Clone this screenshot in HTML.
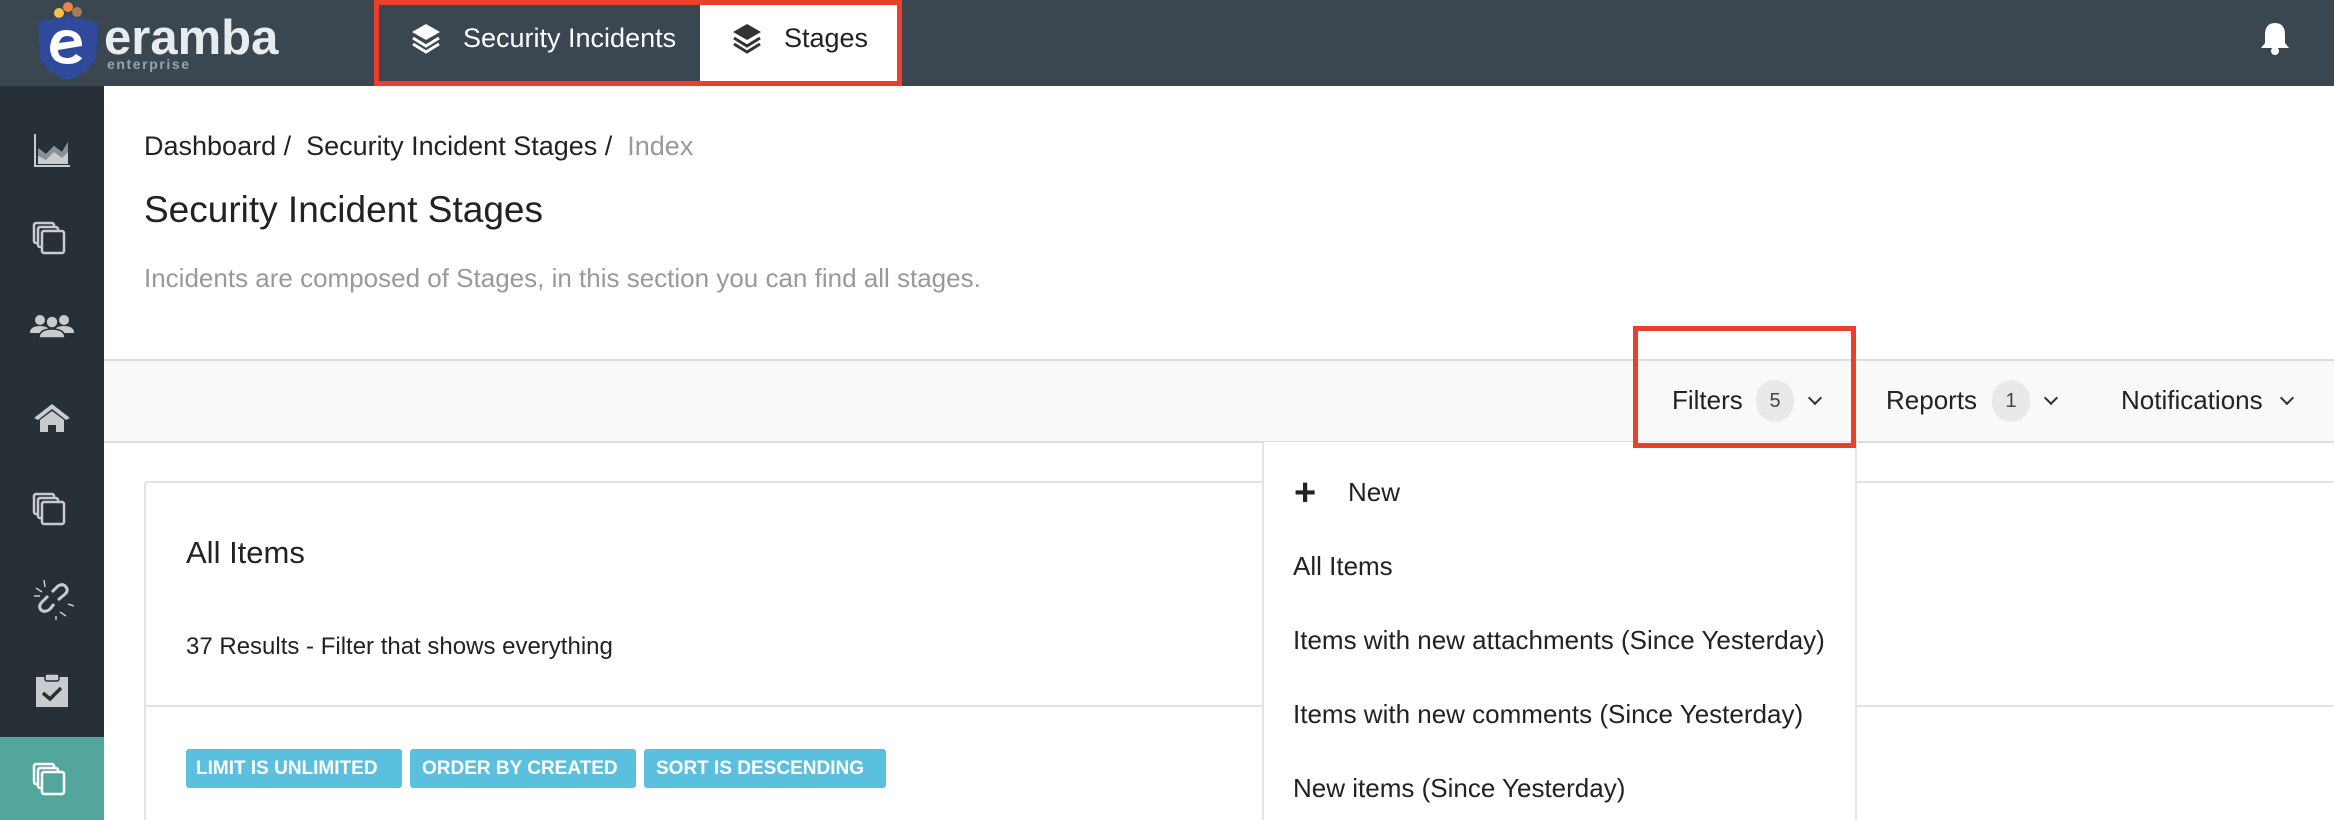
<!DOCTYPE html>
<html style="width:2334px;height:820px;overflow:hidden"><head><meta charset="utf-8"><style>
*{box-sizing:border-box;margin:0;padding:0}
body{width:2334px;height:820px;overflow:hidden;background:#fff;font-family:"Liberation Sans",Arial,sans-serif;position:relative;color:#222}
.top{position:absolute;left:0;top:0;width:2334px;height:86px;background:#3a4650}
.side{position:absolute;left:0;top:86px;width:104px;height:734px;background:#283037}
.abs{position:absolute}
.ic{position:absolute;left:30px;width:44px;height:44px}
.chev{position:absolute;width:10px;height:10px;border-right:2px solid #333;border-bottom:2px solid #333;transform:rotate(45deg)}
</style></head><body>
<div class="top"></div>
<svg class="abs" style="left:30px;top:0" width="80" height="86" viewBox="0 0 80 86">
<circle cx="29" cy="13" r="5" fill="#f2c14e"/><circle cx="38" cy="7" r="5" fill="#e8864a"/><circle cx="47" cy="12" r="5" fill="#a87c5a"/>
<path d="M8 22 L38 16 L68 22 L66 58 Q60 72 38 80 Q16 72 10 58 Z" fill="#2f4a9c"/>
<path d="M36 30 Q22 30 20 47 Q20 64 38 64 Q48 64 52 58 L46 54 Q42 58 38 58 Q28 58 28 50 L52 46 Q52 30 36 30 Z M29 43 Q31 36 37 36 Q44 36 44 41 Z" fill="#fff"/>
</svg>
<div class="abs" style="left:104px;top:10px;font-size:49px;font-weight:bold;color:#e8ecef">eramba</div>
<div class="abs" style="left:107px;top:56px;font-size:14px;font-weight:bold;color:#9aa3ab;letter-spacing:1.6px">enterprise</div>
<div class="abs" style="left:374px;top:0;width:528px;height:86px;border:5px solid #e8402a;background:#3a4650"></div>
<div class="abs" style="left:700px;top:5px;width:197px;height:76px;background:#fff"></div>
<svg class="abs" style="left:410px;top:22px" width="32" height="34" viewBox="0 0 32 34"><path d="M16 2 L30 10 L16 18 L2 10 Z" fill="#fff"/><path d="M3 16 L16 24 L29 16" stroke="#fff" stroke-width="3" fill="none"/><path d="M3 22 L16 30 L29 22" stroke="#fff" stroke-width="3" fill="none"/></svg>
<div class="abs" style="left:463px;top:23px;font-size:27px;color:#fff">Security Incidents</div>
<svg class="abs" style="left:731px;top:22px" width="32" height="34" viewBox="0 0 32 34"><path d="M16 2 L30 10 L16 18 L2 10 Z" fill="#333"/><path d="M3 16 L16 24 L29 16" stroke="#333" stroke-width="3" fill="none"/><path d="M3 22 L16 30 L29 22" stroke="#333" stroke-width="3" fill="none"/></svg>
<div class="abs" style="left:784px;top:23px;font-size:27px;color:#222">Stages</div>
<svg class="abs" style="left:2259px;top:20px" width="32" height="36" viewBox="0 0 32 36"><path d="M16 3 Q26 3 26 15 L26 23 L30 28 L2 28 L6 23 L6 15 Q6 3 16 3 Z" fill="#fff"/><circle cx="16" cy="31" r="4" fill="#fff"/></svg>
<div class="side"></div>
<div class="abs" style="left:0;top:737px;width:104px;height:83px;background:#52a69c"></div>
<svg class="ic" style="top:128px" viewBox="0 0 44 44"><path d="M5 6 V38 H40" stroke="#c8ccce" stroke-width="2" fill="none"/><path d="M8 20 L16 26 L24 18 L32 24 L38 14 V36 H8 Z" fill="#c8ccce"/><path d="M8 20 L16 26 L24 18 L32 24 L38 14 V24 L32 30 L24 24 L16 32 L8 28Z" fill="#8a9196"/></svg>
<svg class="ic" style="top:217px" viewBox="0 0 44 44"><g fill="none" stroke="#c8ccce" stroke-width="2.5"><rect x="4" y="6" width="20" height="20" rx="2"/><rect x="8" y="10" width="20" height="20" rx="2" fill="#283037"/><rect x="12" y="14" width="22" height="22" rx="2" fill="#283037"/></g></svg>
<svg class="ic" style="top:305px" viewBox="0 0 44 44"><g fill="#c8ccce"><circle cx="10" cy="15" r="5"/><circle cx="34" cy="15" r="5"/><path d="M0 28 Q0 21 10 21 Q20 21 20 28 Z M24 28 Q24 21 34 21 Q44 21 44 28Z"/><circle cx="22" cy="17" r="6" stroke="#283037" stroke-width="1.5"/><path d="M9 33 Q9 24 22 24 Q35 24 35 33 Z" stroke="#283037" stroke-width="1.5"/></g></svg>
<svg class="ic" style="top:396px" viewBox="0 0 44 44"><path d="M4 22 L22 8 L40 22 L36 24 L22 13 L8 24 Z" fill="#c8ccce"/><path d="M10 24 L22 15 L34 24 V36 H26 V29 H18 V36 H10 Z" fill="#c8ccce"/></svg>
<svg class="ic" style="top:488px" viewBox="0 0 44 44"><g fill="none" stroke="#c8ccce" stroke-width="2.5"><rect x="4" y="6" width="20" height="20" rx="2"/><rect x="8" y="10" width="20" height="20" rx="2" fill="#283037"/><rect x="12" y="14" width="22" height="22" rx="2" fill="#283037"/></g></svg>
<svg class="ic" style="top:576px" viewBox="0 0 44 44"><g fill="none" stroke="#c8ccce" stroke-width="3"><path d="M22 16 L28 10 Q33 7 36 11 Q39 15 34 19 L28 24"/><path d="M18 20 L12 26 Q8 30 11 34 Q15 37 20 33 L24 28"/></g><g stroke="#c8ccce" stroke-width="1.5"><path d="M6 12 L12 16 M14 4 L15 11 M30 36 L36 40 M38 28 L44 30 M4 20 L10 20 M26 40 L26 44"/></g></svg>
<svg class="ic" style="top:669px" viewBox="0 0 44 44"><rect x="6" y="8" width="32" height="30" fill="#c8ccce"/><rect x="15" y="5" width="14" height="7" rx="2" fill="#c8ccce" stroke="#283037" stroke-width="1.5"/><path d="M13 24 L20 30 L31 19" stroke="#283037" stroke-width="3.5" fill="none"/></svg>
<svg class="ic" style="top:758px" viewBox="0 0 44 44"><g fill="none" stroke="#fff" stroke-width="2.5"><rect x="4" y="6" width="20" height="20" rx="2"/><rect x="8" y="10" width="20" height="20" rx="2" fill="#52a69c"/><rect x="12" y="14" width="22" height="22" rx="2" fill="#52a69c"/></g></svg>
<div class="abs" style="left:144px;top:131px;font-size:27px;color:#222">Dashboard /&nbsp; Security Incident Stages /&nbsp; <span style="color:#999">Index</span></div>
<div class="abs" style="left:144px;top:189px;font-size:37px;color:#222">Security Incident Stages</div>
<div class="abs" style="left:144px;top:263px;font-size:26px;color:#999">Incidents are composed of Stages, in this section you can find all stages.</div>
<div class="abs" style="left:104px;top:359px;width:2230px;height:84px;background:#f9f9f9;border-top:2px solid #ddd;border-bottom:2px solid #ddd"></div>
<div class="abs" style="left:1672px;top:385px;font-size:26px;color:#222">Filters</div>
<div class="abs" style="left:1756px;top:380px;width:38px;height:42px;border-radius:19px;background:#e9e9e9;font-size:20px;color:#444;text-align:center;line-height:42px">5</div>
<div class="chev" style="left:1810px;top:393px"></div>
<div class="abs" style="left:1886px;top:385px;font-size:26px;color:#222">Reports</div>
<div class="abs" style="left:1992px;top:380px;width:38px;height:42px;border-radius:19px;background:#e9e9e9;font-size:20px;color:#444;text-align:center;line-height:42px">1</div>
<div class="chev" style="left:2046px;top:393px"></div>
<div class="abs" style="left:2121px;top:385px;font-size:26px;color:#222">Notifications</div>
<div class="chev" style="left:2282px;top:393px"></div>
<div class="abs" style="left:144px;top:481px;width:2250px;height:339px;border:2px solid #e3e3e3;border-bottom:none;border-radius:4px 4px 0 0;background:#fff"></div>
<div class="abs" style="left:146px;top:705px;width:2200px;height:2px;background:#e3e3e3"></div>
<div class="abs" style="left:186px;top:535px;font-size:31px;color:#222">All Items</div>
<div class="abs" style="left:186px;top:633px;font-size:24px;color:#222">37 Results - Filter that shows everything</div>
<div class="abs" style="top:749px;left:186px;height:39px;display:flex;gap:8px">
<div style="background:#5bc0de;color:#fff;font-size:19px;font-weight:bold;padding:0 10px;line-height:39px;border-radius:3px;width:216px">LIMIT IS UNLIMITED</div>
<div style="background:#5bc0de;color:#fff;font-size:19px;font-weight:bold;padding:0 12px;line-height:39px;border-radius:3px;width:226px">ORDER BY CREATED</div>
<div style="background:#5bc0de;color:#fff;font-size:19px;font-weight:bold;padding:0 12px;line-height:39px;border-radius:3px;width:242px">SORT IS DESCENDING</div>
</div>
<div class="abs" style="left:1262px;top:442px;width:595px;height:378px;background:#fff;border:2px solid #e3e3e3;border-top:none;border-bottom:none"></div>
<div class="abs" style="left:1294px;top:474px;font-size:38px;color:#222;font-weight:bold;line-height:38px">+</div>
<div class="abs" style="left:1348px;top:477px;font-size:26px;color:#222">New</div>
<div class="abs" style="left:1293px;top:551px;font-size:26px;color:#222">All Items</div>
<div class="abs" style="left:1293px;top:625px;font-size:26px;color:#222">Items with new attachments (Since Yesterday)</div>
<div class="abs" style="left:1293px;top:699px;font-size:26px;color:#222">Items with new comments (Since Yesterday)</div>
<div class="abs" style="left:1293px;top:773px;font-size:26px;color:#222">New items (Since Yesterday)</div>
<div class="abs" style="left:1633px;top:326px;width:223px;height:122px;border:5px solid #e8402a"></div>
</body></html>
